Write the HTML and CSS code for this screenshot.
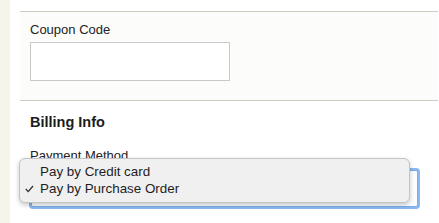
FILE: index.html
```html
<!DOCTYPE html>
<html lang="en">
<head>
    <meta charset="UTF-8">
    <meta name="viewport" content="width=device-width, initial-scale=1.0">
    <title>Checkout</title>
    <link rel="stylesheet" href="styles.css">
</head>
<body>
    <div class="page">
        <div class="rail"></div>
        <div class="main">
            <div class="coupon-box">
                <label class="field-label" for="coupon">Coupon Code</label>
                <input class="coupon-input" type="text" id="coupon">
            </div>

            <div class="billing">
                <h3>Billing Info</h3>
                <div class="field-label">Payment Method</div>
                <div class="select-wrap">
                    <div class="select-box"></div>
                    <ul class="select-menu">
                        <li>Pay by Credit card</li>
                        <li class="checked">
                            <svg class="check" width="9" height="8" viewBox="0 0 9 8">
                                <path d="M0.8 4 L3.2 6.6 L8 1" fill="none" stroke="#2a2a2a" stroke-width="1.2"/>
                            </svg>
                            Pay by Purchase Order
                        </li>
                    </ul>
                </div>
            </div>
        </div>
    </div>
</body>
</html>
```

FILE: styles.css
```css
body {
    margin: 0;
    font-family: "Liberation Sans", Arial, sans-serif;
    color: #222;
    background: white;
}
.page {
    display: flex;
    height: 223px;
    overflow: hidden;
}
.rail {
    width: 10px;
    background: #f6f5ea;
}
.main {
    flex: 1;
    padding: 0 1px 0 10px;
}
.coupon-box {
    margin-top: 11px;
    padding: 10px 10px 19px;
    background: #fcfcfa;
    border-top: 1px solid #cdcbbf;
    border-bottom: 1px solid #cdcbbf;
}
.field-label {
    display: block;
    font-size: 13px;
    line-height: 15px;
    margin-bottom: 5px;
}
.coupon-input {
    display: block;
    box-sizing: border-box;
    width: 200px;
    height: 39px;
    margin: 0;
    border: 1px solid #c9c9c9;
    background: white;
}
.billing {
    padding: 0 10px;
}
.billing h3 {
    margin: 13px 0 17px;
    font-size: 14.5px;
    line-height: 17px;
    font-weight: bold;
    color: #1c1c1c;
}
.billing .field-label {
    margin-bottom: 7px;
}
.select-wrap {
    position: relative;
}
.select-box {
    box-sizing: border-box;
    width: 387px;
    height: 37px;
    margin-left: 1px;
    border: 1px solid #78aee8;
    border-radius: 2px;
    background: #fbfdff;
    box-shadow: 0 0 0 2px rgba(100, 160, 235, 0.75);
}
.select-menu {
    position: absolute;
    top: -12px;
    left: -11px;
    width: 391px;
    box-sizing: border-box;
    margin: 0;
    padding: 4px 0 5px;
    list-style: none;
    background: #f0f0f0;
    border: 1px solid #c4c4c4;
    border-radius: 6px;
    box-shadow: 0 2px 5px rgba(0, 0, 0, 0.22);
}
.select-menu li {
    position: relative;
    padding-left: 20px;
    font-size: 13.4px;
    line-height: 17px;
    color: #1e1e1e;
}
.check {
    position: absolute;
    left: 5px;
    top: 5px;
}
```
